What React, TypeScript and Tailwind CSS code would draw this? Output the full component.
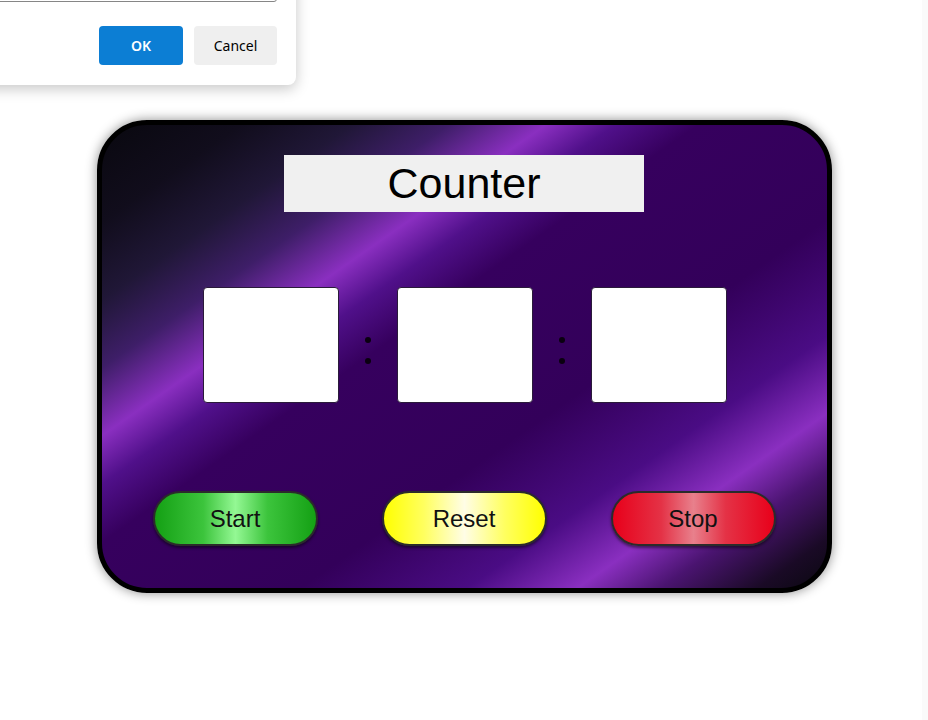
import React from "react";

const Digit: React.FC = () => (
  <div className="w-[136px] h-[116px] bg-white border border-[#2a1a3a] rounded-[4px]" />
);

const Colon: React.FC = () => (
  <div className="w-[58px] flex flex-col items-center gap-[15px] mt-[11px]">
    <div className="w-[6px] h-[6px] rounded-full bg-[#0a0010]" />
    <div className="w-[6px] h-[6px] rounded-full bg-[#0a0010]" />
  </div>
);

const App: React.FC = () => {
  return (
    <div className="relative w-full min-h-screen bg-white overflow-hidden font-['Liberation_Sans',Arial,sans-serif]">
      {/* dialog peeking in from the top-left */}
      <div className="absolute top-[-40px] left-[-40px] w-[336px] h-[125px] bg-white rounded-[8px] shadow-[0_4px_14px_rgba(0,0,0,0.22)] flex flex-col pt-[12px] pb-[20px] pl-[19px] pr-[19px] font-['Noto_Sans','Open_Sans',sans-serif] z-10">
        <div className="h-[30px] border border-[#868686] rounded-[3px]" />
        <div className="mt-[24px] flex justify-end gap-[11px]">
          <button className="w-[84px] h-[39px] rounded-[4px] bg-[#0c7ed4] text-white text-[14px] font-semibold">
            OK
          </button>
          <button className="w-[83px] h-[39px] rounded-[4px] bg-[#efefef] text-black text-[14px]">
            Cancel
          </button>
        </div>
      </div>

      {/* scrollbar track */}
      <div className="absolute top-0 right-0 w-[6px] h-full bg-[#fafafa]" />

      <div className="pt-[120px] flex justify-center">
        <div className="w-[735px] h-[473px] border-[5px] border-black rounded-[50px] shadow-[0_0_12px_rgba(0,0,0,0.45)] bg-[linear-gradient(145deg,#09080f_0%,#110d1c_10%,#201737_18%,#3e1e68_25%,#8a2fc0_32%,#50108a_37%,#36005e_43%,#33005a_62%,#4a0c84_74%,#8a2fc0_82%,#4a1470_88%,#1a0a26_95%,#0a0810_100%)] flex flex-col items-center px-[51px]">
          <div className="mt-[30px] w-[360px] h-[57px] bg-[#f0f0f0] flex items-center justify-center text-[43px] text-black leading-none">
            Counter
          </div>

          <div className="mt-[75px] ml-[1px] flex items-center">
            <Digit />
            <Colon />
            <Digit />
            <Colon />
            <Digit />
          </div>

          <div className="mt-[88px] w-full flex justify-between">
            <button className="w-[165px] h-[55px] rounded-full border-2 border-[#2b2b2b] shadow-[0_2px_3px_rgba(0,0,0,0.5)] bg-[linear-gradient(to_right,#14a014_0%,#3cc43c_30%,#94f894_50%,#3cc43c_70%,#14a014_100%)] text-[24px] text-[#111]">
              Start
            </button>
            <button className="w-[165px] h-[55px] rounded-full border-2 border-[#2b2b2b] shadow-[0_2px_3px_rgba(0,0,0,0.5)] bg-[linear-gradient(to_right,#ffff00_0%,#ffff60_25%,#fffde6_50%,#ffff60_75%,#ffff00_100%)] text-[24px] text-[#111]">
              Reset
            </button>
            <button className="w-[165px] h-[55px] rounded-full border-2 border-[#2b2b2b] shadow-[0_2px_3px_rgba(0,0,0,0.5)] bg-[linear-gradient(to_right,#e8001a_0%,#e43246_30%,#e8808c_50%,#e43246_70%,#e8001a_100%)] text-[24px] text-[#111]">
              Stop
            </button>
          </div>
        </div>
      </div>
    </div>
  );
};

export default App;
